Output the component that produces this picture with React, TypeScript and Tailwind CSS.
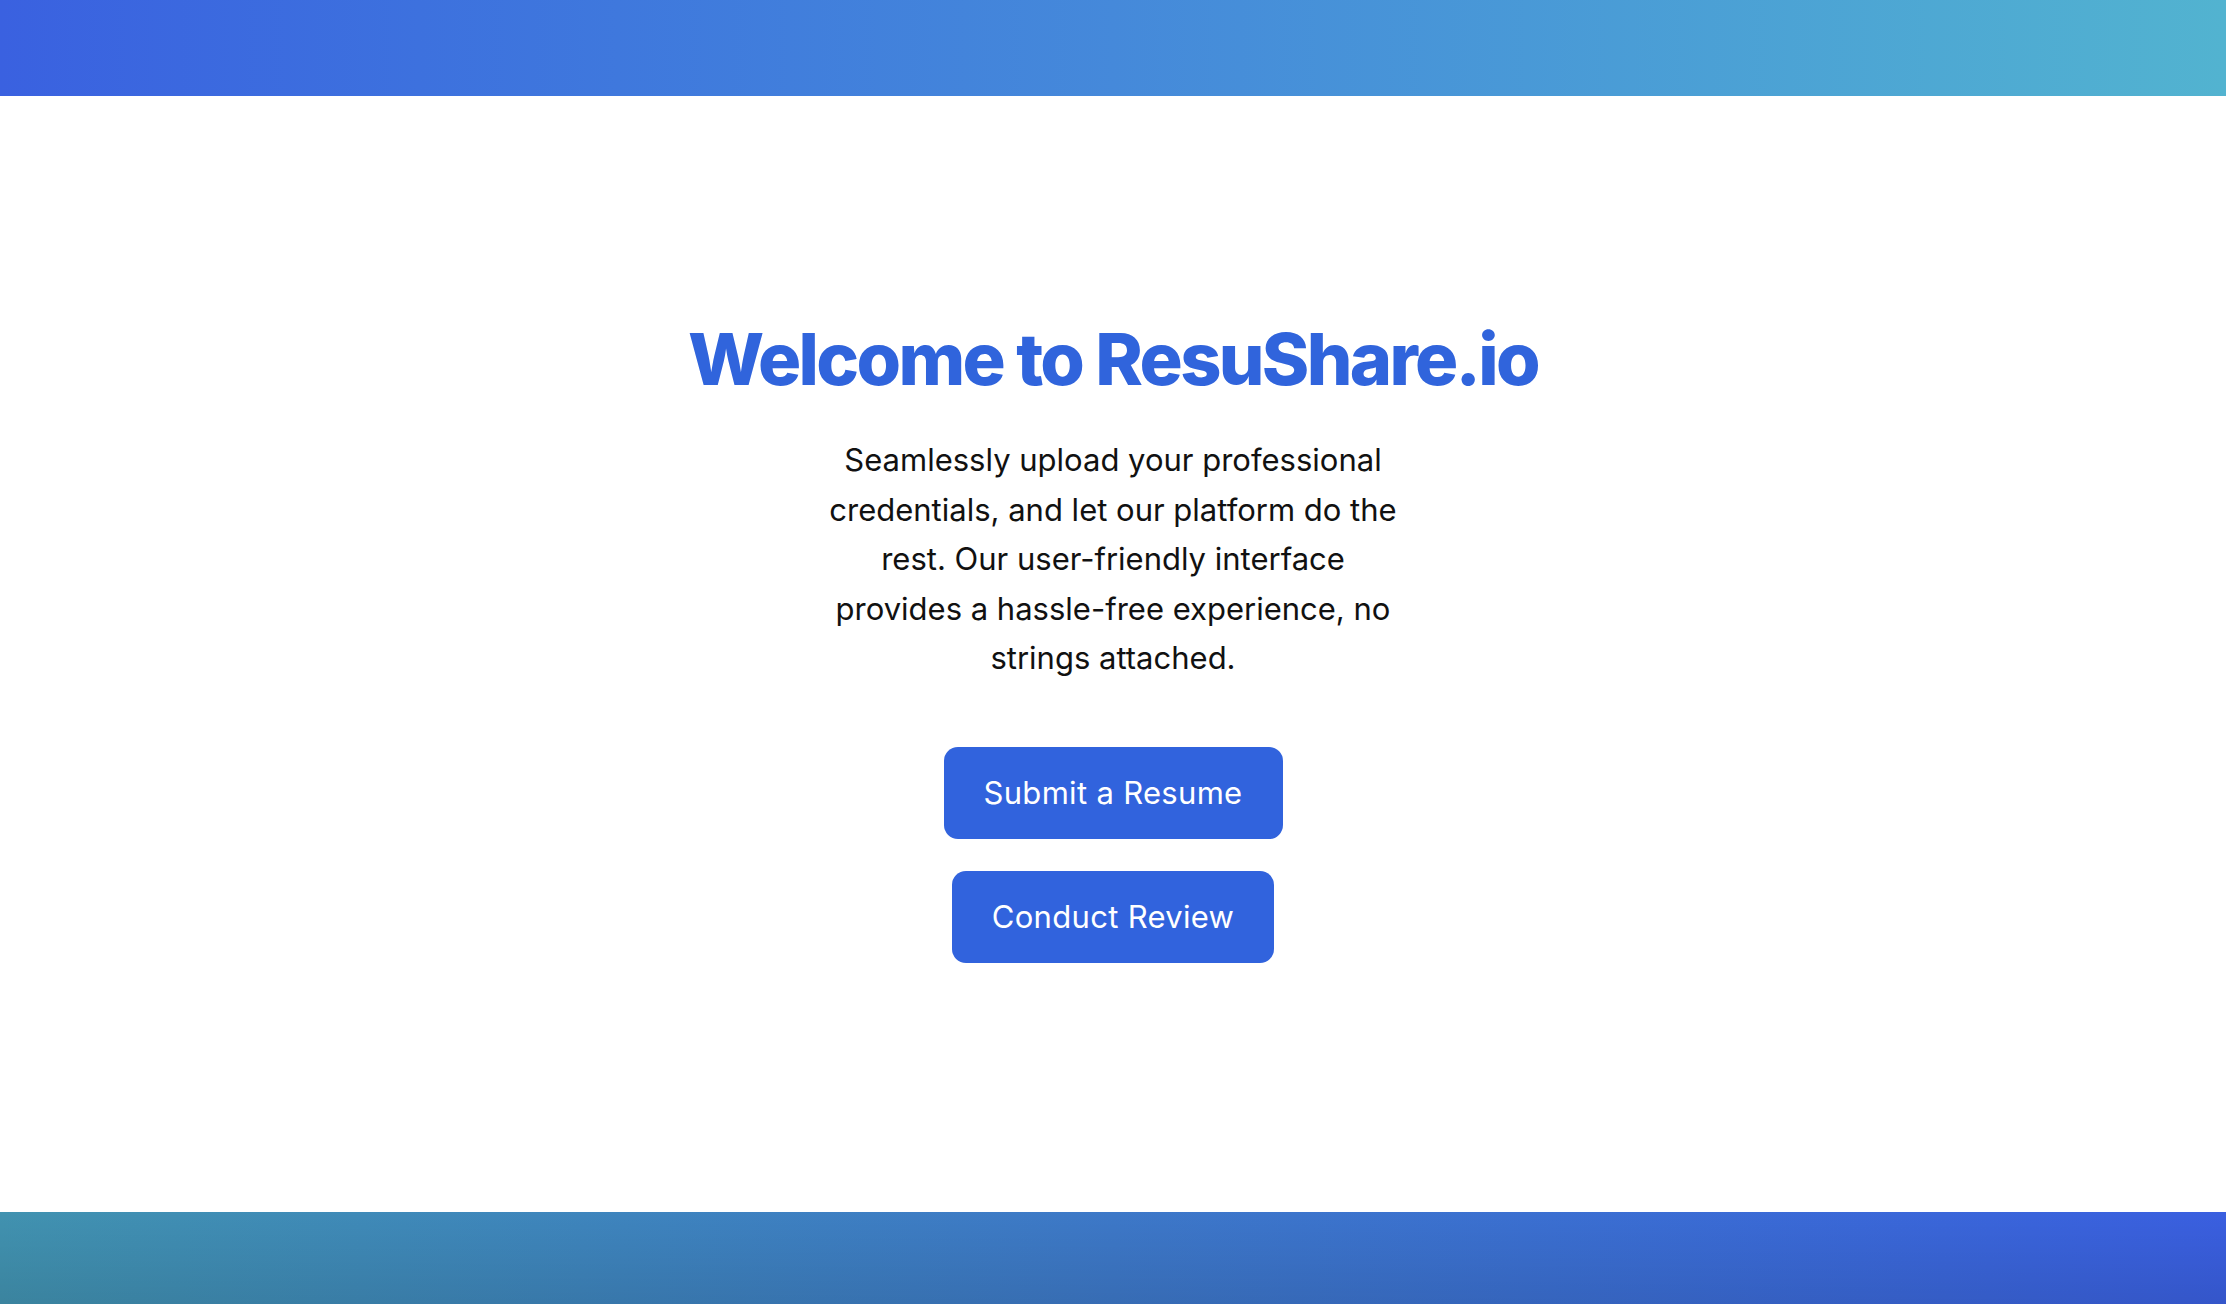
import React from 'react';

export default function App() {
  return (
    <div className="flex h-screen flex-col bg-white font-['Inter',sans-serif]">
      <header className="h-[96px] shrink-0 bg-gradient-to-r from-[#3a61e0] via-[#4589da] to-[#52b3d0]" />

      <main className="flex flex-1 flex-col items-center justify-center pb-[22px]">
        <h1 className="text-[72px] font-extrabold leading-none tracking-[-0.037em] text-[#3064dc]">
          Welcome to ResuShare.io
        </h1>
        <p className="mt-10 max-w-[584px] text-center text-[31px] leading-[49.5px] text-[#111111]">
          Seamlessly upload your professional credentials, and let our platform do the rest. Our
          user-friendly interface provides a hassle-free experience, no strings attached.
        </p>
        <div className="mt-16 flex flex-col items-center gap-8">
          <button
            type="button"
            className="rounded-[14px] bg-[#3163dd] px-10 py-7 text-[31px] leading-[36px] tracking-[0.01em] text-white"
          >
            Submit a Resume
          </button>
          <button
            type="button"
            className="rounded-[14px] bg-[#3163dd] px-10 py-7 text-[31px] leading-[36px] tracking-[0.01em] text-white"
          >
            Conduct Review
          </button>
        </div>
      </main>

      <footer className="relative h-[92px] shrink-0 bg-gradient-to-r from-[#4192b0] via-[#3d78c8] to-[#3a5fe0]">
        <div className="absolute inset-0 bg-gradient-to-b from-transparent to-black/10" />
      </footer>
    </div>
  );
}
